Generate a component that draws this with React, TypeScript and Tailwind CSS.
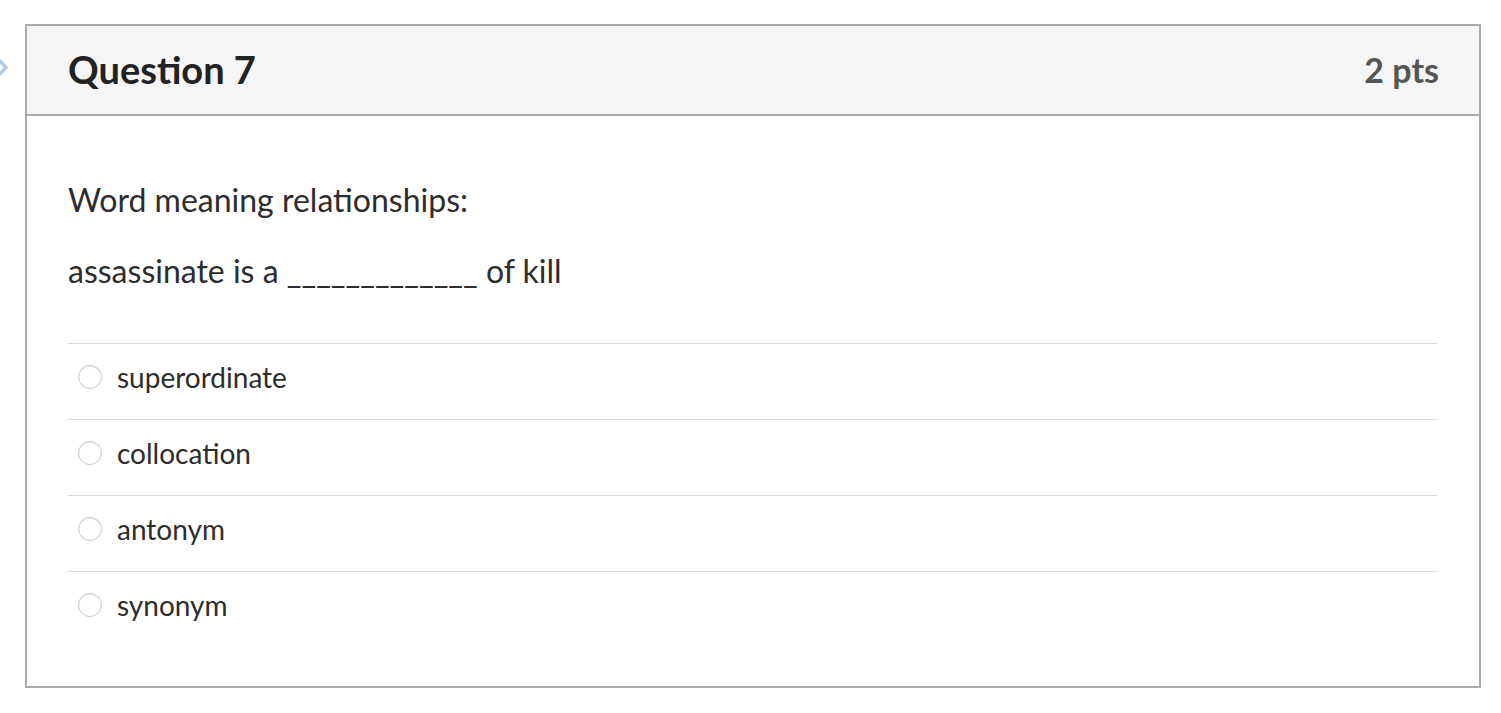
const options = ["superordinate", "collocation", "antonym", "synonym"];

const Radio = () => (
  <span className="w-[24px] h-[24px] rounded-full border border-[#c8c8c8] bg-white shadow-[inset_0_1px_2px_rgba(0,0,0,0.08)] shrink-0" />
);

export default function App() {
  return (
    <div
      className="w-[1501px] h-[713px] bg-white flex"
      style={{ fontFamily: "Lato, 'Open Sans', sans-serif" }}
    >
      <div className="w-[25px] shrink-0 pt-[54px] overflow-hidden">
        <svg width="25" height="28" viewBox="0 0 25 28">
          <path d="M-6 1 L6 13.5 L-6 26" fill="none" stroke="#b3cbe0" strokeWidth="3.5" />
        </svg>
      </div>
      <div className="mt-[24px] w-[1456px] h-[664px] border-2 border-[#aaaaaa] flex flex-col">
        <div className="h-[90px] bg-[#f5f5f5] border-b-2 border-[#aaaaaa] flex items-center justify-between pl-[41px] pr-[40px] pb-[2px]">
          <h2 className="text-[38px] font-bold text-[#222]">Question 7</h2>
          <span className="text-[34px] font-bold text-[#555]">2 pts</span>
        </div>
        <div className="px-[41px] pt-[64px] flex flex-col">
          <p className="text-[32px] text-[#2d2d2d] leading-[40px]">Word meaning relationships:</p>
          <p className="text-[32px] text-[#2d2d2d] leading-[40px] mt-[31px]">
            assassinate is a _____________ of kill
          </p>
          <div className="mt-[52px] mr-[1px] border-t border-[#dcdcdc]">
            {options.map((o, i) => (
              <div
                key={o}
                className={`h-[76px] flex items-center gap-[15px] pl-[10px] pb-[10px] ${
                  i < options.length - 1 ? "border-b border-[#dcdcdc]" : ""
                }`}
              >
                <Radio />
                <span className="text-[28px] text-[#2d2d2d]">{o}</span>
              </div>
            ))}
          </div>
        </div>
      </div>
    </div>
  );
}
